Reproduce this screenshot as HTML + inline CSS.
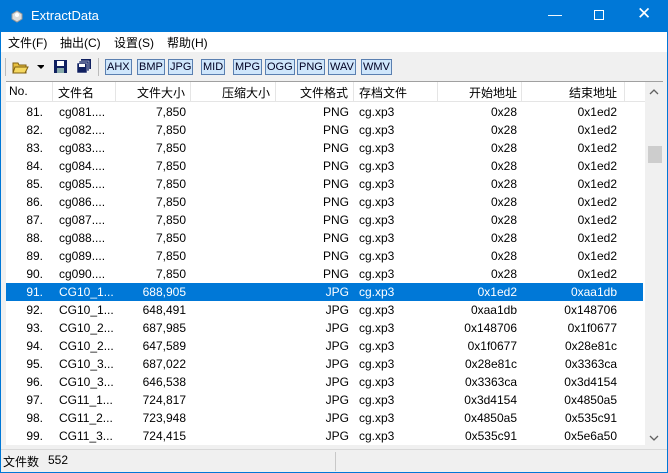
<!DOCTYPE html>
<html><head><meta charset="utf-8"><style>
*{margin:0;padding:0;box-sizing:border-box}
body{width:668px;height:473px;overflow:hidden;background:#f0f0f0;font-family:"Liberation Sans","Noto Sans CJK SC",sans-serif;font-size:12px;color:#000;position:relative}
.abs{position:absolute}
#title{left:0;top:0;width:668px;height:32px;background:#0078d7;color:#fff;font-size:13px}
#menu{left:1px;top:32px;width:666px;height:20px;background:#fff}
#menu span{position:absolute;top:2px}
#tb{left:1px;top:52px;width:666px;height:28px;background:#f0f0f0}
.btn{position:absolute;top:7px;height:16px;border:1px solid #5a7fb0;background:#cfe6fb;font-size:11px;line-height:14px;padding:0 1px;color:#002}
#list{left:6px;top:81px;width:657px;height:364px;background:#fff;border-top:1px solid #a0a0a0}
#hdr{left:6px;top:82px;width:639px;height:20px;background:#fff;border-bottom:1px solid #e5e5e5}
.h{position:absolute;top:2px}
.sep{position:absolute;top:0;width:1px;height:19px;background:#e5e5e5}
.r{position:absolute;left:6px;width:637px;height:18px;line-height:18px}
.r span{position:absolute;top:0}
.sel{background:#0078d7;color:#fff}
#status{left:1px;top:449px;width:666px;height:23px;background:#f0f0f0;border-top:1px solid #d8d8d8}
</style></head><body>
<div class="abs" style="left:0;top:0;width:1px;height:473px;background:#0078d7"></div>
<div class="abs" style="left:667px;top:0;width:1px;height:473px;background:#0078d7"></div>
<div class="abs" style="left:0;top:472px;width:668px;height:1px;background:#0078d7"></div>
<div id="title" class="abs">
 <svg class="abs" style="left:9px;top:8px" width="16" height="16"><path d="M3 6 L8 3 L13 6 L13 11 L8 14 L3 11Z" fill="#ddd" stroke="#999"/><circle cx="8" cy="7" r="2" fill="#fff"/></svg>
 <span class="abs" style="left:31px;top:8px">ExtractData</span>
 <span class="abs" style="left:548px;top:6px;font-size:14px">&#8212;</span>
 <div class="abs" style="left:594px;top:10px;width:10px;height:10px;border:1px solid #fff"></div>
 <span class="abs" style="left:637px;top:4px;font-size:17px">&#10005;</span>
</div>
<div id="menu" class="abs"><span style="left:7px">文件(F)</span><span style="left:59px">抽出(C)</span><span style="left:113px">设置(S)</span><span style="left:166px">帮助(H)</span></div>
<div id="tb" class="abs">
 <div class="abs" style="left:4px;top:6px;width:1px;height:18px;background:#bbb"></div>
 <svg class="abs" style="left:11px;top:7px" width="32" height="16"><path d="M1 4h5l1 2h7v8H1z" fill="#e8c040" stroke="#806010"/><path d="M3 8h13l-3 6H1z" fill="#f5d860" stroke="#806010"/><path d="M25 6h8l-4 4z" fill="#000"/></svg>
 <svg class="abs" style="left:52px;top:7px" width="16" height="16"><rect x="1" y="1" width="13" height="13" fill="#102060"/><rect x="4" y="2" width="7" height="5" fill="#fff"/><rect x="4" y="9" width="7" height="5" fill="#8aa"/></svg>
 <svg class="abs" style="left:75px;top:6px" width="16" height="16"><rect x="5" y="1" width="10" height="10" fill="#102060"/><rect x="3" y="3" width="10" height="10" fill="#203070" stroke="#fff" stroke-width=".5"/><rect x="1" y="5" width="10" height="10" fill="#102060" stroke="#fff" stroke-width=".5"/><rect x="3" y="6" width="6" height="3" fill="#fff"/></svg>
 <div class="abs" style="left:97px;top:6px;width:1px;height:18px;background:#bbb"></div>
 <div class="btn" style="left:104px">AHX</div><div class="btn" style="left:136px">BMP</div><div class="btn" style="left:167px">JPG</div>
 <div class="btn" style="left:200px">MID</div><div class="btn" style="left:232px">MPG</div><div class="btn" style="left:264px">OGG</div><div class="btn" style="left:296px">PNG</div><div class="btn" style="left:327px">WAV</div><div class="btn" style="left:360px">WMV</div>
</div>
<div id="list" class="abs"></div>
<div id="hdr" class="abs">
 <span class="h" style="left:3px">No.</span>
 <div class="sep" style="left:46px"></div><span class="h" style="left:52px">文件名</span>
 <div class="sep" style="left:109px"></div><span class="h" style="left:131px">文件大小</span>
 <div class="sep" style="left:184px"></div><span class="h" style="left:216px">压缩大小</span>
 <div class="sep" style="left:269px"></div><span class="h" style="left:294px">文件格式</span>
 <div class="sep" style="left:347px"></div><span class="h" style="left:353px">存档文件</span>
 <div class="sep" style="left:431px"></div><span class="h" style="left:463px">开始地址</span>
 <div class="sep" style="left:515px"></div><span class="h" style="left:563px">结束地址</span>
 <div class="sep" style="left:618px"></div>
</div>
<div id="rows">
<div class="r" style="top:103px"><span style="right:600px">81.</span><span style="left:53px">cg081....</span><span style="right:457px">7,850</span><span style="right:294px">PNG</span><span style="left:353px">cg.xp3</span><span style="right:126px">0x28</span><span style="right:26px">0x1ed2</span></div>
<div class="r" style="top:121px"><span style="right:600px">82.</span><span style="left:53px">cg082....</span><span style="right:457px">7,850</span><span style="right:294px">PNG</span><span style="left:353px">cg.xp3</span><span style="right:126px">0x28</span><span style="right:26px">0x1ed2</span></div>
<div class="r" style="top:139px"><span style="right:600px">83.</span><span style="left:53px">cg083....</span><span style="right:457px">7,850</span><span style="right:294px">PNG</span><span style="left:353px">cg.xp3</span><span style="right:126px">0x28</span><span style="right:26px">0x1ed2</span></div>
<div class="r" style="top:157px"><span style="right:600px">84.</span><span style="left:53px">cg084....</span><span style="right:457px">7,850</span><span style="right:294px">PNG</span><span style="left:353px">cg.xp3</span><span style="right:126px">0x28</span><span style="right:26px">0x1ed2</span></div>
<div class="r" style="top:175px"><span style="right:600px">85.</span><span style="left:53px">cg085....</span><span style="right:457px">7,850</span><span style="right:294px">PNG</span><span style="left:353px">cg.xp3</span><span style="right:126px">0x28</span><span style="right:26px">0x1ed2</span></div>
<div class="r" style="top:193px"><span style="right:600px">86.</span><span style="left:53px">cg086....</span><span style="right:457px">7,850</span><span style="right:294px">PNG</span><span style="left:353px">cg.xp3</span><span style="right:126px">0x28</span><span style="right:26px">0x1ed2</span></div>
<div class="r" style="top:211px"><span style="right:600px">87.</span><span style="left:53px">cg087....</span><span style="right:457px">7,850</span><span style="right:294px">PNG</span><span style="left:353px">cg.xp3</span><span style="right:126px">0x28</span><span style="right:26px">0x1ed2</span></div>
<div class="r" style="top:229px"><span style="right:600px">88.</span><span style="left:53px">cg088....</span><span style="right:457px">7,850</span><span style="right:294px">PNG</span><span style="left:353px">cg.xp3</span><span style="right:126px">0x28</span><span style="right:26px">0x1ed2</span></div>
<div class="r" style="top:247px"><span style="right:600px">89.</span><span style="left:53px">cg089....</span><span style="right:457px">7,850</span><span style="right:294px">PNG</span><span style="left:353px">cg.xp3</span><span style="right:126px">0x28</span><span style="right:26px">0x1ed2</span></div>
<div class="r" style="top:265px"><span style="right:600px">90.</span><span style="left:53px">cg090....</span><span style="right:457px">7,850</span><span style="right:294px">PNG</span><span style="left:353px">cg.xp3</span><span style="right:126px">0x28</span><span style="right:26px">0x1ed2</span></div>
<div class="r sel" style="top:283px"><span style="right:600px">91.</span><span style="left:53px">CG10_1...</span><span style="right:457px">688,905</span><span style="right:294px">JPG</span><span style="left:353px">cg.xp3</span><span style="right:126px">0x1ed2</span><span style="right:26px">0xaa1db</span></div>
<div class="r" style="top:301px"><span style="right:600px">92.</span><span style="left:53px">CG10_1...</span><span style="right:457px">648,491</span><span style="right:294px">JPG</span><span style="left:353px">cg.xp3</span><span style="right:126px">0xaa1db</span><span style="right:26px">0x148706</span></div>
<div class="r" style="top:319px"><span style="right:600px">93.</span><span style="left:53px">CG10_2...</span><span style="right:457px">687,985</span><span style="right:294px">JPG</span><span style="left:353px">cg.xp3</span><span style="right:126px">0x148706</span><span style="right:26px">0x1f0677</span></div>
<div class="r" style="top:337px"><span style="right:600px">94.</span><span style="left:53px">CG10_2...</span><span style="right:457px">647,589</span><span style="right:294px">JPG</span><span style="left:353px">cg.xp3</span><span style="right:126px">0x1f0677</span><span style="right:26px">0x28e81c</span></div>
<div class="r" style="top:355px"><span style="right:600px">95.</span><span style="left:53px">CG10_3...</span><span style="right:457px">687,022</span><span style="right:294px">JPG</span><span style="left:353px">cg.xp3</span><span style="right:126px">0x28e81c</span><span style="right:26px">0x3363ca</span></div>
<div class="r" style="top:373px"><span style="right:600px">96.</span><span style="left:53px">CG10_3...</span><span style="right:457px">646,538</span><span style="right:294px">JPG</span><span style="left:353px">cg.xp3</span><span style="right:126px">0x3363ca</span><span style="right:26px">0x3d4154</span></div>
<div class="r" style="top:391px"><span style="right:600px">97.</span><span style="left:53px">CG11_1...</span><span style="right:457px">724,817</span><span style="right:294px">JPG</span><span style="left:353px">cg.xp3</span><span style="right:126px">0x3d4154</span><span style="right:26px">0x4850a5</span></div>
<div class="r" style="top:409px"><span style="right:600px">98.</span><span style="left:53px">CG11_2...</span><span style="right:457px">723,948</span><span style="right:294px">JPG</span><span style="left:353px">cg.xp3</span><span style="right:126px">0x4850a5</span><span style="right:26px">0x535c91</span></div>
<div class="r" style="top:427px"><span style="right:600px">99.</span><span style="left:53px">CG11_3...</span><span style="right:457px">724,415</span><span style="right:294px">JPG</span><span style="left:353px">cg.xp3</span><span style="right:126px">0x535c91</span><span style="right:26px">0x5e6a50</span></div>
</div>
<div class="abs" style="left:645px;top:82px;width:18px;height:363px;background:#f0f0f0"></div>
<svg class="abs" style="left:649px;top:88px" width="10" height="8"><path d="M1 6 L5 2 L9 6" fill="none" stroke="#606060" stroke-width="1.3"/></svg>
<div class="abs" style="left:648px;top:146px;width:14px;height:17px;background:#cdcdcd"></div>
<svg class="abs" style="left:649px;top:434px" width="10" height="8"><path d="M1 2 L5 6 L9 2" fill="none" stroke="#606060" stroke-width="1.3"/></svg>
<div id="status" class="abs">
 <span class="abs" style="left:2px;top:3px">文件数</span><span class="abs" style="left:47px;top:3px">552</span>
 <div class="abs" style="left:334px;top:2px;width:1px;height:19px;background:#c8c8c8"></div>
</div>
</body></html>
